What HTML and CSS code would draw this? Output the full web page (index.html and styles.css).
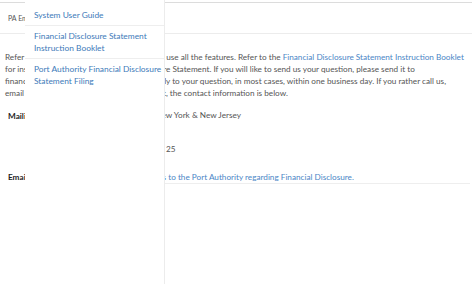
FILE: index.html
```html
<!DOCTYPE html>
<html>
<head>
<meta charset="utf-8">
<link rel="stylesheet" href="styles.css">
</head>
<body>
<div class="page">
  <header class="topbar">
    <span class="brand">PA Employee Portal</span>
  </header>
  <main class="content">
    <p class="intro">
      <span class="ln">Refer to the Portal User Guide to see how to use all the features. Refer to the <a href="#">Financial Disclosure Statement Instruction Booklet</a></span>
      <span class="ln">for instructions on completing your Disclosure Statement. If you will like to send us your question, please send it to</span>
      <span class="ln">financialdisclosure@panynj.gov. We shall reply to your question, in most cases, within one business day. If you rather call us,</span>
      <span class="ln">email is not your preferred means for contact, the contact information is below.</span>
    </p>
    <div class="info">
      <div class="label">Mailing Address</div>
      <div class="value address">
        <span class="ln">The Port Authority of New York &amp; New Jersey</span>
        <span class="ln">Attn: Disclosure Unit</span>
        <span class="ln">4 World Trade Center</span>
        <span class="ln">150 Greenwich St, Floor 25</span>
      </div>
    </div>
    <div class="info email">
      <div class="label">Email</div>
      <div class="value"><a href="#">Please send all questions to the Port Authority regarding Financial Disclosure.</a></div>
    </div>
  </main>
  <nav class="menu">
    <a class="item" href="#">System User Guide</a>
    <a class="item" href="#">Financial Disclosure Statement Instruction Booklet</a>
    <a class="item" href="#">Port Authority Financial Disclosure Statement Filing</a>
  </nav>
</div>
</body>
</html>
```

FILE: styles.css
```css
html, body {
  margin: 0;
  padding: 0;
  background: #fff;
}
body {
  font-family: "Lato", "Open Sans", sans-serif;
  font-size: 8.2px;
  color: #555;
}
a {
  color: #4a86c6;
  text-decoration: none;
}
.page {
  position: relative;
  height: 284px;
  overflow: hidden;
}
.topbar {
  margin-top: 2px;
  border-top: 1px solid #dcdcdc;
  border-bottom: 1px solid #ececec;
  height: 30px;
  display: flex;
  align-items: center;
  padding-left: 8px;
  width: 464px;
}
.brand {
  font-size: 7px;
  color: #555;
}
.content {
  padding: 0 5px;
}
.ln {
  display: block;
  white-space: nowrap;
}
.intro {
  margin: 17px 0 0;
  line-height: 12px;
}
.info {
  display: grid;
  grid-template-columns: 69px 393px;
  line-height: 12px;
  margin-top: 11px;
  padding-left: 3px;
}
.label {
  font-weight: bold;
  color: #222;
  white-space: nowrap;
  overflow: hidden;
}
.address {
  line-height: 11.4px;
}
.info.email {
  margin-top: 15px;
}
.info.email .value {
  border-bottom: 1px solid #eee;
}
.menu {
  position: absolute;
  left: 25px;
  top: 0;
  width: 140px;
  height: 284px;
  background: #fff;
  border-right: 1px solid #ececec;
  padding-top: 5px;
  box-sizing: border-box;
  display: flex;
  flex-direction: column;
}
.menu .item {
  padding: 4px 0 4px 9px;
  line-height: 12px;
  color: #3d7ab9;
  font-size: 8.4px;
  border-bottom: 1px solid #eee;
}
.menu .item:last-child {
  border-bottom: none;
}
```
